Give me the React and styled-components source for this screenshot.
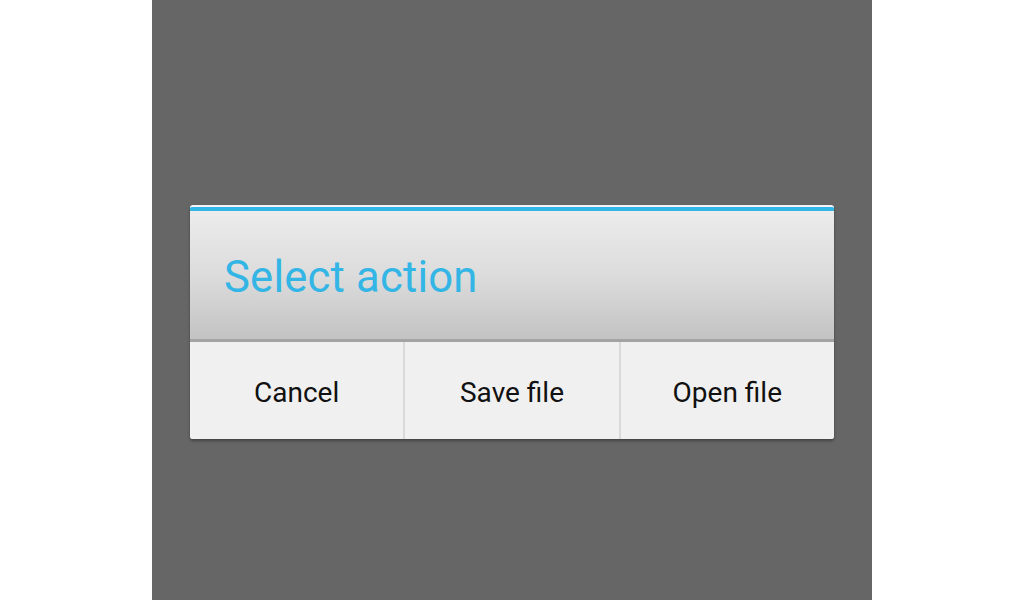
import React from "react";
import styled, { createGlobalStyle } from "styled-components";

const GlobalStyle = createGlobalStyle`
  html, body {
    margin: 0;
    padding: 0;
    background: #ffffff;
    font-family: Roboto, "Noto Sans", sans-serif;
  }
`;

const Screen = styled.div`
  display: flex;
  justify-content: center;
  width: 1024px;
  height: 600px;
`;

const Backdrop = styled.div`
  width: 720px;
  height: 600px;
  background: #666666;
  padding-top: 205px;
  box-sizing: border-box;
  display: flex;
  justify-content: center;
  align-items: flex-start;
`;

const Dialog = styled.div`
  width: 644px;
  border-radius: 3px;
  overflow: hidden;
  background: #f0f0f0;
  box-shadow: 0 2px 3px rgba(0, 0, 0, 0.35);
  border-top: 2px solid #f4f4f4;
`;

const Header = styled.div`
  box-sizing: border-box;
  height: 135px;
  border-top: 4px solid #33b5e5;
  border-bottom: 3px solid #a3a3a3;
  background: linear-gradient(to bottom, #ececec 0%, #dcdcdc 50%, #c3c3c3 100%);
  display: flex;
  align-items: center;
  padding: 4px 0 0 34px;
`;

const Title = styled.h1`
  margin: 0;
  font-weight: 400;
  font-size: 43.6px;
  color: #33b5e5;
  letter-spacing: 0.2px;
`;

const ButtonRow = styled.div`
  display: flex;
  height: 97px;
`;

const ActionButton = styled.button`
  flex: 1;
  border: none;
  background: #f0f0f0;
  font-family: Roboto, "Noto Sans", sans-serif;
  font-size: 28px;
  color: #111111;
  padding: 4px 0 0;
  cursor: pointer;
  & + & {
    border-left: 2px solid #d9d9d9;
  }
`;

const actions = ["Cancel", "Save file", "Open file"];

const App = () => {
  return (
    <>
      <GlobalStyle />
      <Screen>
        <Backdrop>
          <Dialog>
            <Header>
              <Title>Select action</Title>
            </Header>
            <ButtonRow>
              {actions.map((label) => (
                <ActionButton key={label}>{label}</ActionButton>
              ))}
            </ButtonRow>
          </Dialog>
        </Backdrop>
      </Screen>
    </>
  );
};

export default App;
